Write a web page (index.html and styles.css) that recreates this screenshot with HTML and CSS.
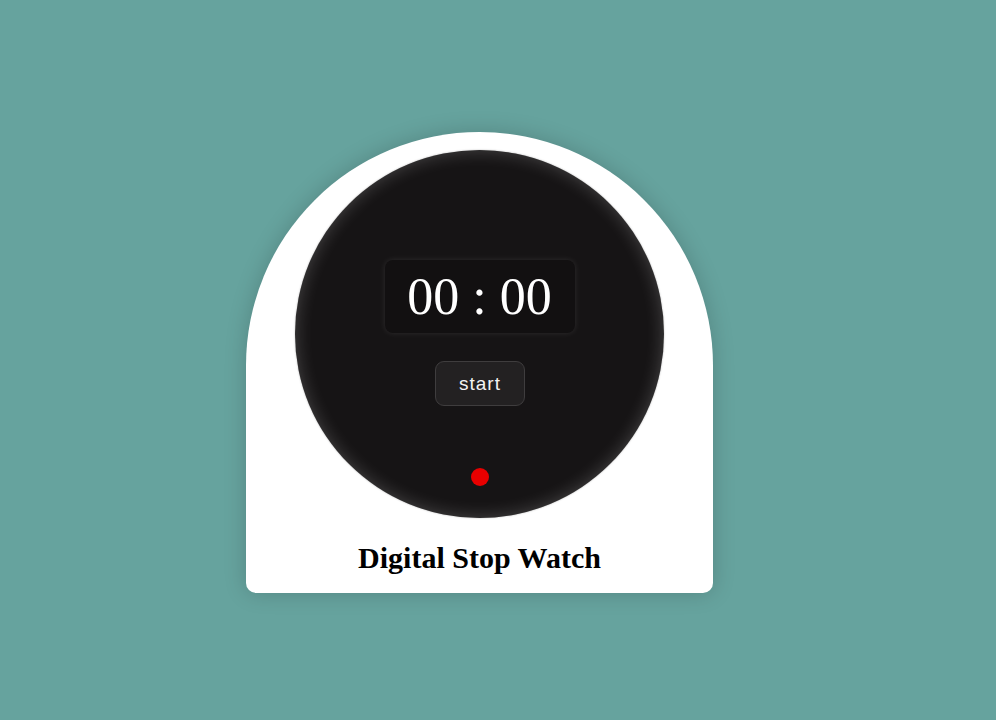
FILE: index.html
```html
<!DOCTYPE html>
<html>
<head>
<meta charset="utf-8">
<link rel="stylesheet" href="styles.css">
</head>
<body>
<div class="page">
  <div class="card">
    <div class="dial">
      <div class="display">00 : 00</div>
      <button class="btn">start</button>
      <div class="dot"></div>
    </div>
    <h1 class="title">Digital Stop Watch</h1>
  </div>
</div>
</body>
</html>
```
FILE: styles.css
```css
html, body {
  margin: 0;
  padding: 0;
}
body {
  background: #66a39e;
  font-family: "Liberation Serif", "Times New Roman", serif;
}
.page {
  box-sizing: border-box;
  height: 720px;
  padding: 5px 37px 0 0;
  display: flex;
  align-items: center;
  justify-content: center;
}
.card {
  box-sizing: border-box;
  width: 467px;
  height: 461px;
  background: #ffffff;
  border-radius: 234px 234px 10px 10px;
  box-shadow: 0 0 22px rgba(0, 0, 0, 0.18);
  padding-top: 18px;
  display: flex;
  flex-direction: column;
  align-items: center;
}
.dial {
  box-sizing: border-box;
  width: 369px;
  height: 368px;
  border-radius: 50%;
  background: #161415;
  box-shadow: inset 0 0 18px rgba(255, 255, 255, 0.22), 0 0 2px rgba(0, 0, 0, 0.3);
  display: flex;
  flex-direction: column;
  align-items: center;
  padding-top: 110px;
}
.display {
  box-sizing: border-box;
  width: 190px;
  height: 73px;
  border-radius: 8px;
  background: #121011;
  box-shadow: 0 0 6px rgba(255, 255, 255, 0.1);
  color: #ffffff;
  font-family: "Liberation Serif", "Times New Roman", serif;
  font-size: 52px;
  line-height: 73px;
  text-align: center;
}
.btn {
  box-sizing: border-box;
  margin-top: 28px;
  width: 90px;
  height: 45px;
  border-radius: 9px;
  background: #232122;
  border: 1px solid #3f3d3e;
  color: #f4f4f4;
  font-family: "Liberation Sans", Arial, sans-serif;
  font-size: 19px;
  letter-spacing: 1px;
  padding: 0 0 0 1px;
  cursor: pointer;
}
.dot {
  margin-top: 62px;
  width: 18px;
  height: 18px;
  border-radius: 50%;
  background: #e80000;
}
.title {
  margin: 23px 0 0 0;
  font-family: "Liberation Serif", "Times New Roman", serif;
  font-weight: bold;
  font-size: 30px;
  line-height: 34px;
  color: #000000;
}
```
